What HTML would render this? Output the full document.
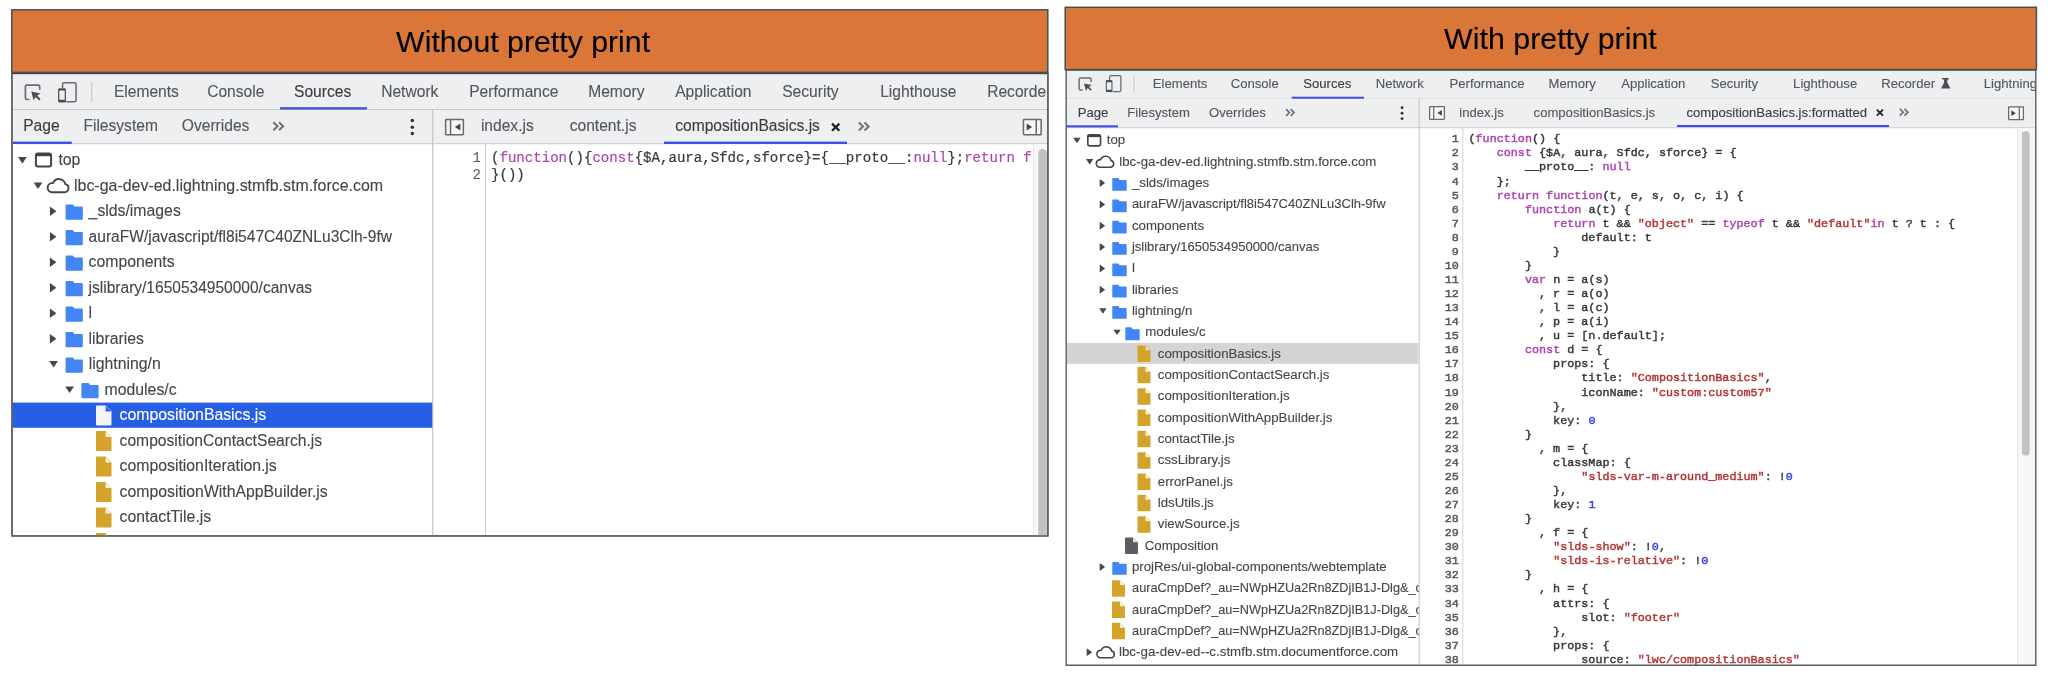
<!DOCTYPE html>
<html><head><meta charset="utf-8"><style>
html,body{margin:0;padding:0;background:#fff;width:2048px;height:683px;overflow:hidden}
svg{display:block;filter:blur(0.3px)}
</style></head><body>
<svg width="2048" height="683" viewBox="0 0 2048 683">
<rect x="12.00" y="73.00" width="1036.00" height="463.00" fill="#ffffff" stroke="#5a5d60" stroke-width="1.4"/>
<rect x="12.70" y="73.70" width="1034.60" height="35.50" fill="#edeff0" />
<rect x="12.00" y="72.40" width="1036.00" height="1.80" fill="#3f4650" />
<rect x="12.70" y="109.00" width="1034.60" height="1.00" fill="#c6c8cb" />
<rect x="12.70" y="110.00" width="1034.60" height="33.40" fill="#edeff0" />
<rect x="12.70" y="143.20" width="1034.60" height="1.00" fill="#c6c8cb" />
<rect x="432.00" y="110.00" width="1.30" height="425.30" fill="#c6c8cb" />
<rect x="485.00" y="144.00" width="1.00" height="391.30" fill="#cdd0d3" />
<rect x="11.80" y="9.80" width="1036.00" height="62.60" fill="#d97638" stroke="#47505a" stroke-width="1.5"/>
<text x="396.10" y="51.70" font-size="30.3" fill="#000" font-family="'Liberation Sans', sans-serif" textLength="254.00" lengthAdjust="spacingAndGlyphs" stroke="#000" stroke-width="0.12" >Without pretty print</text>
<g transform="translate(24.50,84.20) scale(1.0000)"><path d="M5 15.3 H2.6 Q0.9 15.3 0.9 13.6 V2.6 Q0.9 0.9 2.6 0.9 H13.5 Q15.2 0.9 15.2 2.6 V5.5" fill="none" stroke="#686b6f" stroke-width="1.7"/><path d="M6.8 7.3 L16 9.3 L12.7 11.3 L16.1 14.8 L14.7 16.2 L11.2 12.7 L9 16 Z" fill="#4d4f52"/></g>
<g transform="translate(58.00,82.10) scale(1.0000)"><rect x="4.55" y="0.75" width="13.5" height="18.9" rx="1.4" fill="none" stroke="#686b6f" stroke-width="1.5"/><rect x="-0.3" y="6" width="8.6" height="14.6" rx="1.4" fill="#edeff0"/><rect x="0.65" y="6.95" width="6.7" height="12.7" rx="1" fill="none" stroke="#55585c" stroke-width="1.3"/><rect x="0.3" y="6.3" width="7.4" height="2.2" rx="0.8" fill="#4a4d50"/><rect x="0.3" y="17.6" width="7.4" height="2.2" rx="0.8" fill="#4a4d50"/></g>
<rect x="91.00" y="82.00" width="1.30" height="20.00" fill="#c8cacd" />
<text x="113.90" y="97.30" font-size="15.6" fill="#54575b" font-family="'Liberation Sans', sans-serif" stroke="#54575b" stroke-width="0.12" >Elements</text>
<text x="207.20" y="97.30" font-size="15.6" fill="#54575b" font-family="'Liberation Sans', sans-serif" stroke="#54575b" stroke-width="0.12" >Console</text>
<text x="294.00" y="97.30" font-size="15.6" fill="#3a3c3f" font-family="'Liberation Sans', sans-serif" stroke="#3a3c3f" stroke-width="0.12" >Sources</text>
<text x="381.20" y="97.30" font-size="15.6" fill="#54575b" font-family="'Liberation Sans', sans-serif" stroke="#54575b" stroke-width="0.12" >Network</text>
<text x="469.20" y="97.30" font-size="15.6" fill="#54575b" font-family="'Liberation Sans', sans-serif" stroke="#54575b" stroke-width="0.12" >Performance</text>
<text x="588.20" y="97.30" font-size="15.6" fill="#54575b" font-family="'Liberation Sans', sans-serif" stroke="#54575b" stroke-width="0.12" >Memory</text>
<text x="675.20" y="97.30" font-size="15.6" fill="#54575b" font-family="'Liberation Sans', sans-serif" stroke="#54575b" stroke-width="0.12" >Application</text>
<text x="782.20" y="97.30" font-size="15.6" fill="#54575b" font-family="'Liberation Sans', sans-serif" stroke="#54575b" stroke-width="0.12" >Security</text>
<text x="880.20" y="97.30" font-size="15.6" fill="#54575b" font-family="'Liberation Sans', sans-serif" stroke="#54575b" stroke-width="0.12" >Lighthouse</text>
<clipPath id="clipTL"><rect x="0" y="0" width="1047.2" height="683"/></clipPath><g clip-path="url(#clipTL)">
<text x="987.20" y="97.30" font-size="15.6" fill="#54575b" font-family="'Liberation Sans', sans-serif" stroke="#54575b" stroke-width="0.12" >Recorder</text>
</g>
<rect x="280.00" y="107.20" width="87.00" height="2.30" fill="#3f4fe2" />
<text x="23.20" y="131.20" font-size="15.6" fill="#3a3c3f" font-family="'Liberation Sans', sans-serif" stroke="#3a3c3f" stroke-width="0.12" >Page</text>
<text x="83.40" y="131.20" font-size="15.6" fill="#54575b" font-family="'Liberation Sans', sans-serif" stroke="#54575b" stroke-width="0.12" >Filesystem</text>
<text x="181.80" y="131.20" font-size="15.6" fill="#54575b" font-family="'Liberation Sans', sans-serif" stroke="#54575b" stroke-width="0.12" >Overrides</text>
<rect x="12.70" y="141.60" width="59.00" height="2.40" fill="#3f4fe2" />
<g transform="translate(272.20,121.20) scale(1.0000)"><path d="M1.2 1.0 L5.3 5.05 L1.2 9.1 M6.8 1.0 L10.9 5.05 L6.8 9.1" fill="none" stroke="#727477" stroke-width="2.1"/></g>
<g transform="translate(410.55,118.75) scale(1.0000)"><circle cx="1.75" cy="1.75" r="1.75" fill="#333"/><circle cx="1.75" cy="8.45" r="1.75" fill="#333"/><circle cx="1.75" cy="14.85" r="1.75" fill="#333"/></g>
<g transform="translate(444.90,118.70) scale(1.0000)"><rect x="0.75" y="0.75" width="17.7" height="15.2" rx="0.6" fill="#f7f7f8" stroke="#66696d" stroke-width="1.5"/><rect x="4.9" y="0.9" width="1.5" height="14.9" fill="#66696d"/><path d="M10 8.35 L15.4 4.9 V11.8 Z" fill="#444"/></g>
<text x="480.90" y="131.20" font-size="15.6" fill="#54575b" font-family="'Liberation Sans', sans-serif" stroke="#54575b" stroke-width="0.12" >index.js</text>
<text x="569.70" y="131.20" font-size="15.6" fill="#54575b" font-family="'Liberation Sans', sans-serif" stroke="#54575b" stroke-width="0.12" >content.js</text>
<text x="675.20" y="131.20" font-size="15.6" fill="#3a3c3f" font-family="'Liberation Sans', sans-serif" stroke="#3a3c3f" stroke-width="0.12" >compositionBasics.js</text>
<g transform="translate(831.00,122.60) scale(1.0000)"><path d="M1 1 L8.4 8.1 M8.4 1 L1 8.1" fill="none" stroke="#222" stroke-width="2.2"/></g>
<g transform="translate(857.70,121.40) scale(1.0000)"><path d="M1.2 1.0 L5.3 5.05 L1.2 9.1 M6.8 1.0 L10.9 5.05 L6.8 9.1" fill="none" stroke="#727477" stroke-width="2.1"/></g>
<g transform="translate(1022.70,118.70) scale(1.0000)"><rect x="0.75" y="0.75" width="17.7" height="15.2" rx="0.6" fill="#f7f7f8" stroke="#66696d" stroke-width="1.5"/><rect x="12.8" y="0.9" width="1.5" height="14.9" fill="#66696d"/><path d="M9.4 8.35 L4 4.9 V11.8 Z" fill="#444"/></g>
<rect x="664.00" y="141.60" width="183.00" height="2.40" fill="#3f4fe2" />
<g transform="translate(18.00,156.90) scale(1.0000)"><path d="M0 0 H8.8 L4.4 6.5 Z" fill="#474747"/></g>
<g transform="translate(34.90,152.60) scale(1.0000)"><rect x="1" y="1" width="15.2" height="13" rx="2" fill="none" stroke="#444" stroke-width="2"/><rect x="1" y="1" width="15.2" height="2.6" fill="#444"/></g>
<text x="58.40" y="165.30" font-size="15.8" fill="#43464a" font-family="'Liberation Sans', sans-serif" stroke="#43464a" stroke-width="0.12" >top</text>
<g transform="translate(33.60,182.50) scale(1.0000)"><path d="M0 0 H8.8 L4.4 6.5 Z" fill="#474747"/></g>
<g transform="translate(46.60,178.20) scale(1.0000)"><path transform="translate(-0.6 -0.5) scale(1.05)" d="M5.2 13.8 H17.6 A3.9 3.9 0 0 0 18.4 6.1 A6.2 6.2 0 0 0 6.6 5.2 A4.3 4.3 0 0 0 5.2 13.8 Z" fill="none" stroke="#444" stroke-width="1.8" stroke-linejoin="round"/></g>
<text x="74.00" y="190.80" font-size="15.8" fill="#43464a" font-family="'Liberation Sans', sans-serif" stroke="#43464a" stroke-width="0.12" transform="translate(74.00 0) scale(1.0095 1) translate(-74.00 0)" >lbc-ga-dev-ed.lightning.stmfb.stm.force.com</text>
<g transform="translate(49.90,206.40) scale(1.0000)"><path d="M0 0 L6.5 4.8 L0 9.6 Z" fill="#474747"/></g>
<g transform="translate(65.60,204.40) scale(1.0000)"><path d="M0 1 Q0 0 1 0 H7.2 L8.8 2.2 H16.3 Q17.2 2.2 17.2 3.1 V14.4 Q17.2 15.3 16.3 15.3 H0.9 Q0 15.3 0 14.4 Z" fill="#4285f4"/></g>
<text x="88.60" y="216.30" font-size="15.8" fill="#43464a" font-family="'Liberation Sans', sans-serif" stroke="#43464a" stroke-width="0.12" >_slds/images</text>
<g transform="translate(49.90,231.90) scale(1.0000)"><path d="M0 0 L6.5 4.8 L0 9.6 Z" fill="#474747"/></g>
<g transform="translate(65.60,229.90) scale(1.0000)"><path d="M0 1 Q0 0 1 0 H7.2 L8.8 2.2 H16.3 Q17.2 2.2 17.2 3.1 V14.4 Q17.2 15.3 16.3 15.3 H0.9 Q0 15.3 0 14.4 Z" fill="#4285f4"/></g>
<text x="88.60" y="241.80" font-size="15.8" fill="#43464a" font-family="'Liberation Sans', sans-serif" stroke="#43464a" stroke-width="0.12" transform="translate(88.60 0) scale(0.985 1) translate(-88.60 0)" >auraFW/javascript/fl8i547C40ZNLu3Clh-9fw</text>
<g transform="translate(49.90,257.40) scale(1.0000)"><path d="M0 0 L6.5 4.8 L0 9.6 Z" fill="#474747"/></g>
<g transform="translate(65.60,255.40) scale(1.0000)"><path d="M0 1 Q0 0 1 0 H7.2 L8.8 2.2 H16.3 Q17.2 2.2 17.2 3.1 V14.4 Q17.2 15.3 16.3 15.3 H0.9 Q0 15.3 0 14.4 Z" fill="#4285f4"/></g>
<text x="88.60" y="267.30" font-size="15.8" fill="#43464a" font-family="'Liberation Sans', sans-serif" stroke="#43464a" stroke-width="0.12" >components</text>
<g transform="translate(49.90,282.90) scale(1.0000)"><path d="M0 0 L6.5 4.8 L0 9.6 Z" fill="#474747"/></g>
<g transform="translate(65.60,280.90) scale(1.0000)"><path d="M0 1 Q0 0 1 0 H7.2 L8.8 2.2 H16.3 Q17.2 2.2 17.2 3.1 V14.4 Q17.2 15.3 16.3 15.3 H0.9 Q0 15.3 0 14.4 Z" fill="#4285f4"/></g>
<text x="88.60" y="292.80" font-size="15.8" fill="#43464a" font-family="'Liberation Sans', sans-serif" stroke="#43464a" stroke-width="0.12" transform="translate(88.60 0) scale(0.983 1) translate(-88.60 0)" >jslibrary/1650534950000/canvas</text>
<g transform="translate(49.90,308.40) scale(1.0000)"><path d="M0 0 L6.5 4.8 L0 9.6 Z" fill="#474747"/></g>
<g transform="translate(65.60,306.40) scale(1.0000)"><path d="M0 1 Q0 0 1 0 H7.2 L8.8 2.2 H16.3 Q17.2 2.2 17.2 3.1 V14.4 Q17.2 15.3 16.3 15.3 H0.9 Q0 15.3 0 14.4 Z" fill="#4285f4"/></g>
<text x="88.60" y="318.30" font-size="15.8" fill="#43464a" font-family="'Liberation Sans', sans-serif" stroke="#43464a" stroke-width="0.12" >l</text>
<g transform="translate(49.90,333.90) scale(1.0000)"><path d="M0 0 L6.5 4.8 L0 9.6 Z" fill="#474747"/></g>
<g transform="translate(65.60,331.90) scale(1.0000)"><path d="M0 1 Q0 0 1 0 H7.2 L8.8 2.2 H16.3 Q17.2 2.2 17.2 3.1 V14.4 Q17.2 15.3 16.3 15.3 H0.9 Q0 15.3 0 14.4 Z" fill="#4285f4"/></g>
<text x="88.60" y="343.80" font-size="15.8" fill="#43464a" font-family="'Liberation Sans', sans-serif" stroke="#43464a" stroke-width="0.12" >libraries</text>
<g transform="translate(49.20,361.00) scale(1.0000)"><path d="M0 0 H8.8 L4.4 6.5 Z" fill="#474747"/></g>
<g transform="translate(65.60,357.40) scale(1.0000)"><path d="M0 1 Q0 0 1 0 H7.2 L8.8 2.2 H16.3 Q17.2 2.2 17.2 3.1 V14.4 Q17.2 15.3 16.3 15.3 H0.9 Q0 15.3 0 14.4 Z" fill="#4285f4"/></g>
<text x="88.70" y="369.30" font-size="15.8" fill="#43464a" font-family="'Liberation Sans', sans-serif" stroke="#43464a" stroke-width="0.12" >lightning/n</text>
<g transform="translate(65.20,386.50) scale(1.0000)"><path d="M0 0 H8.8 L4.4 6.5 Z" fill="#474747"/></g>
<g transform="translate(81.40,382.90) scale(1.0000)"><path d="M0 1 Q0 0 1 0 H7.2 L8.8 2.2 H16.3 Q17.2 2.2 17.2 3.1 V14.4 Q17.2 15.3 16.3 15.3 H0.9 Q0 15.3 0 14.4 Z" fill="#4285f4"/></g>
<text x="104.60" y="394.80" font-size="15.8" fill="#43464a" font-family="'Liberation Sans', sans-serif" stroke="#43464a" stroke-width="0.12" >modules/c</text>
<rect x="12.70" y="402.60" width="419.50" height="25.20" fill="#265ee4" />
<g transform="translate(96.00,405.60) scale(1.0000)"><path d="M0 1 Q0 0 1 0 H9.6 L15.5 5.8 V18.8 Q15.5 19.8 14.5 19.8 H1 Q0 19.8 0 18.8 Z" fill="#f4f4f4"/><path d="M9.6 0.4 V5.8 H15.1 Z" fill="#265ee4"/></g>
<text x="119.60" y="420.30" font-size="15.8" fill="#ffffff" font-family="'Liberation Sans', sans-serif" stroke="#ffffff" stroke-width="0.12" >compositionBasics.js</text>
<g transform="translate(96.00,431.10) scale(1.0000)"><path d="M0 1 Q0 0 1 0 H9.6 L15.5 5.8 V18.8 Q15.5 19.8 14.5 19.8 H1 Q0 19.8 0 18.8 Z" fill="#d4a32c"/><path d="M9.6 0.4 V5.8 H15.1 Z" fill="#fbf4e0"/></g>
<text x="119.60" y="445.80" font-size="15.8" fill="#43464a" font-family="'Liberation Sans', sans-serif" stroke="#43464a" stroke-width="0.12" transform="translate(119.60 0) scale(0.99 1) translate(-119.60 0)" >compositionContactSearch.js</text>
<g transform="translate(96.00,456.60) scale(1.0000)"><path d="M0 1 Q0 0 1 0 H9.6 L15.5 5.8 V18.8 Q15.5 19.8 14.5 19.8 H1 Q0 19.8 0 18.8 Z" fill="#d4a32c"/><path d="M9.6 0.4 V5.8 H15.1 Z" fill="#fbf4e0"/></g>
<text x="119.60" y="471.30" font-size="15.8" fill="#43464a" font-family="'Liberation Sans', sans-serif" stroke="#43464a" stroke-width="0.12" >compositionIteration.js</text>
<g transform="translate(96.00,482.10) scale(1.0000)"><path d="M0 1 Q0 0 1 0 H9.6 L15.5 5.8 V18.8 Q15.5 19.8 14.5 19.8 H1 Q0 19.8 0 18.8 Z" fill="#d4a32c"/><path d="M9.6 0.4 V5.8 H15.1 Z" fill="#fbf4e0"/></g>
<text x="119.60" y="496.80" font-size="15.8" fill="#43464a" font-family="'Liberation Sans', sans-serif" stroke="#43464a" stroke-width="0.12" >compositionWithAppBuilder.js</text>
<g transform="translate(96.00,507.60) scale(1.0000)"><path d="M0 1 Q0 0 1 0 H9.6 L15.5 5.8 V18.8 Q15.5 19.8 14.5 19.8 H1 Q0 19.8 0 18.8 Z" fill="#d4a32c"/><path d="M9.6 0.4 V5.8 H15.1 Z" fill="#fbf4e0"/></g>
<text x="119.60" y="522.30" font-size="15.8" fill="#43464a" font-family="'Liberation Sans', sans-serif" stroke="#43464a" stroke-width="0.12" >contactTile.js</text>
<g transform="translate(96.00,533.10) scale(1.0000)"><path d="M0 1 Q0 0 1 0 H9.6 L15.5 5.8 V18.8 Q15.5 19.8 14.5 19.8 H1 Q0 19.8 0 18.8 Z" fill="#d4a32c"/><path d="M9.6 0.4 V5.8 H15.1 Z" fill="#fbf4e0"/></g>
<text x="481.00" y="162.10" font-size="14" font-family="'Liberation Mono', monospace" fill="#383838" stroke-width="0.0" text-anchor="end" style="white-space:pre"><tspan fill="#555" stroke="#555">1</tspan></text>
<text x="481.00" y="178.90" font-size="14" font-family="'Liberation Mono', monospace" fill="#383838" stroke-width="0.0" text-anchor="end" style="white-space:pre"><tspan fill="#555" stroke="#555">2</tspan></text>
<text x="491.00" y="162.10" font-size="14.09" font-family="'Liberation Mono', monospace" fill="#383838" stroke-width="0.2" text-anchor="start" style="white-space:pre"><tspan fill="#383838" stroke="#383838">(</tspan><tspan fill="#ad45ad" stroke="#ad45ad">function</tspan><tspan fill="#383838" stroke="#383838">(){</tspan><tspan fill="#ad45ad" stroke="#ad45ad">const</tspan><tspan fill="#383838" stroke="#383838">{$A,aura,Sfdc,sforce}={__proto__:</tspan><tspan fill="#ad45ad" stroke="#ad45ad">null</tspan><tspan fill="#383838" stroke="#383838">};</tspan><tspan fill="#ad45ad" stroke="#ad45ad">return</tspan><tspan fill="#ad45ad" stroke="#ad45ad"> f</tspan></text>
<text x="491.00" y="178.90" font-size="14.09" font-family="'Liberation Mono', monospace" fill="#383838" stroke-width="0.2" text-anchor="start" style="white-space:pre"><tspan fill="#383838" stroke="#383838">}())</tspan></text>
<rect x="1033.00" y="144.00" width="14.30" height="391.30" fill="#f7f7f7" />
<rect x="1033.00" y="144.00" width="1.00" height="391.30" fill="#e6e6e6" />
<rect x="1038.3" y="149" width="8.6" height="400" rx="4.3" fill="#c2c2c2"/>
<rect x="0" y="536.6" width="1060" height="147" fill="#fff"/>
<path d="M12 73 V536 H1047.8 V73" fill="none" stroke="#5a5d60" stroke-width="1.4"/>
<rect x="1066.00" y="69.80" width="970.00" height="595.00" fill="#ffffff" />
<rect x="1066.70" y="70.50" width="968.60" height="27.30" fill="#edeff0" />
<rect x="1066.00" y="69.20" width="970.00" height="1.50" fill="#434a54" />
<rect x="1066.70" y="97.90" width="968.60" height="0.90" fill="#c6c8cb" />
<rect x="1066.70" y="98.50" width="968.60" height="29.00" fill="#edeff0" />
<rect x="1066.70" y="127.30" width="968.60" height="0.90" fill="#c6c8cb" />
<rect x="1418.60" y="98.50" width="1.10" height="566.00" fill="#c6c8cb" />
<rect x="1462.40" y="128.00" width="0.90" height="536.50" fill="#cdd0d3" />
<rect x="1065.20" y="7.30" width="971.20" height="62.30" fill="#d97638" stroke="#47505a" stroke-width="1.5"/>
<text x="1444.00" y="49.20" font-size="30.3" fill="#000" font-family="'Liberation Sans', sans-serif" textLength="212.80" lengthAdjust="spacingAndGlyphs" stroke="#000" stroke-width="0.12" >With pretty print</text>
<g transform="translate(1078.40,77.30) scale(0.8350)"><path d="M5 15.3 H2.6 Q0.9 15.3 0.9 13.6 V2.6 Q0.9 0.9 2.6 0.9 H13.5 Q15.2 0.9 15.2 2.6 V5.5" fill="none" stroke="#686b6f" stroke-width="1.7"/><path d="M6.8 7.3 L16 9.3 L12.7 11.3 L16.1 14.8 L14.7 16.2 L11.2 12.7 L9 16 Z" fill="#4d4f52"/></g>
<g transform="translate(1105.80,75.10) scale(0.8350)"><rect x="4.55" y="0.75" width="13.5" height="18.9" rx="1.4" fill="none" stroke="#686b6f" stroke-width="1.5"/><rect x="-0.3" y="6" width="8.6" height="14.6" rx="1.4" fill="#edeff0"/><rect x="0.65" y="6.95" width="6.7" height="12.7" rx="1" fill="none" stroke="#55585c" stroke-width="1.3"/><rect x="0.3" y="6.3" width="7.4" height="2.2" rx="0.8" fill="#4a4d50"/><rect x="0.3" y="17.6" width="7.4" height="2.2" rx="0.8" fill="#4a4d50"/></g>
<rect x="1133.50" y="75.20" width="1.10" height="17.00" fill="#c8cacd" />
<text x="1152.80" y="88.30" font-size="13.1" fill="#54575b" font-family="'Liberation Sans', sans-serif" stroke="#54575b" stroke-width="0.12" >Elements</text>
<text x="1230.70" y="88.30" font-size="13.1" fill="#54575b" font-family="'Liberation Sans', sans-serif" stroke="#54575b" stroke-width="0.12" >Console</text>
<text x="1303.30" y="88.30" font-size="13.1" fill="#3a3c3f" font-family="'Liberation Sans', sans-serif" stroke="#3a3c3f" stroke-width="0.12" >Sources</text>
<text x="1375.70" y="88.30" font-size="13.1" fill="#54575b" font-family="'Liberation Sans', sans-serif" stroke="#54575b" stroke-width="0.12" >Network</text>
<text x="1449.50" y="88.30" font-size="13.1" fill="#54575b" font-family="'Liberation Sans', sans-serif" stroke="#54575b" stroke-width="0.12" >Performance</text>
<text x="1548.60" y="88.30" font-size="13.1" fill="#54575b" font-family="'Liberation Sans', sans-serif" stroke="#54575b" stroke-width="0.12" >Memory</text>
<text x="1621.20" y="88.30" font-size="13.1" fill="#54575b" font-family="'Liberation Sans', sans-serif" stroke="#54575b" stroke-width="0.12" >Application</text>
<text x="1710.70" y="88.30" font-size="13.1" fill="#54575b" font-family="'Liberation Sans', sans-serif" stroke="#54575b" stroke-width="0.12" >Security</text>
<text x="1793.10" y="88.30" font-size="13.1" fill="#54575b" font-family="'Liberation Sans', sans-serif" stroke="#54575b" stroke-width="0.12" >Lighthouse</text>
<text x="1881.30" y="88.30" font-size="13.1" fill="#54575b" font-family="'Liberation Sans', sans-serif" stroke="#54575b" stroke-width="0.12" >Recorder</text>
<clipPath id="clipTR"><rect x="0" y="0" width="2035.2" height="683"/></clipPath><g clip-path="url(#clipTR)">
<text x="1983.80" y="88.30" font-size="13.1" fill="#54575b" font-family="'Liberation Sans', sans-serif" stroke="#54575b" stroke-width="0.12" >Lightning</text>
</g>
<path d="M1941.6 78.1 H1948.7 V79.6 H1947.3 V82.6 L1950.3 88.6 H1941.1 L1944.1 82.6 V79.6 H1942.6 Z" fill="#4a4d51"/>
<rect x="1291.70" y="96.70" width="72.30" height="2.00" fill="#3f4fe2" />
<text x="1077.70" y="116.60" font-size="13.1" fill="#3a3c3f" font-family="'Liberation Sans', sans-serif" stroke="#3a3c3f" stroke-width="0.12" >Page</text>
<text x="1127.30" y="116.60" font-size="13.1" fill="#54575b" font-family="'Liberation Sans', sans-serif" stroke="#54575b" stroke-width="0.12" >Filesystem</text>
<text x="1209.10" y="116.60" font-size="13.1" fill="#54575b" font-family="'Liberation Sans', sans-serif" stroke="#54575b" stroke-width="0.12" >Overrides</text>
<rect x="1066.70" y="125.30" width="51.30" height="2.10" fill="#3f4fe2" />
<g transform="translate(1285.00,108.40) scale(0.8350)"><path d="M1.2 1.0 L5.3 5.05 L1.2 9.1 M6.8 1.0 L10.9 5.05 L6.8 9.1" fill="none" stroke="#727477" stroke-width="2.1"/></g>
<g transform="translate(1400.60,106.20) scale(0.8350)"><circle cx="1.75" cy="1.75" r="1.75" fill="#333"/><circle cx="1.75" cy="8.45" r="1.75" fill="#333"/><circle cx="1.75" cy="14.85" r="1.75" fill="#333"/></g>
<g transform="translate(1429.00,106.00) scale(0.8350)"><rect x="0.75" y="0.75" width="17.7" height="15.2" rx="0.6" fill="#f7f7f8" stroke="#66696d" stroke-width="1.5"/><rect x="4.9" y="0.9" width="1.5" height="14.9" fill="#66696d"/><path d="M10 8.35 L15.4 4.9 V11.8 Z" fill="#444"/></g>
<text x="1459.30" y="116.60" font-size="13.1" fill="#54575b" font-family="'Liberation Sans', sans-serif" stroke="#54575b" stroke-width="0.12" >index.js</text>
<text x="1533.60" y="116.60" font-size="13.1" fill="#54575b" font-family="'Liberation Sans', sans-serif" stroke="#54575b" stroke-width="0.12" >compositionBasics.js</text>
<text x="1686.50" y="116.60" font-size="13.1" fill="#3a3c3f" font-family="'Liberation Sans', sans-serif" stroke="#3a3c3f" stroke-width="0.12" >compositionBasics.js:formatted</text>
<g transform="translate(1876.00,108.80) scale(0.8350)"><path d="M1 1 L8.4 8.1 M8.4 1 L1 8.1" fill="none" stroke="#222" stroke-width="2.2"/></g>
<g transform="translate(1898.80,108.00) scale(0.8350)"><path d="M1.2 1.0 L5.3 5.05 L1.2 9.1 M6.8 1.0 L10.9 5.05 L6.8 9.1" fill="none" stroke="#727477" stroke-width="2.1"/></g>
<g transform="translate(2008.00,106.20) scale(0.8350)"><rect x="0.75" y="0.75" width="17.7" height="15.2" rx="0.6" fill="#f7f7f8" stroke="#66696d" stroke-width="1.5"/><rect x="12.8" y="0.9" width="1.5" height="14.9" fill="#66696d"/><path d="M9.4 8.35 L4 4.9 V11.8 Z" fill="#444"/></g>
<rect x="1677.00" y="125.00" width="212.00" height="2.10" fill="#3f4fe2" />
<clipPath id="clipR"><rect x="1066.7" y="128" width="351.9" height="536"/></clipPath><g clip-path="url(#clipR)">
<g transform="translate(1073.30,137.70) scale(0.8350)"><path d="M0 0 H8.8 L4.4 6.5 Z" fill="#474747"/></g>
<g transform="translate(1087.00,134.10) scale(0.8350)"><rect x="1" y="1" width="15.2" height="13" rx="2" fill="none" stroke="#444" stroke-width="2"/><rect x="1" y="1" width="15.2" height="2.6" fill="#444"/></g>
<text x="1106.80" y="144.30" font-size="13.25" fill="#43464a" font-family="'Liberation Sans', sans-serif" stroke="#43464a" stroke-width="0.12" >top</text>
<g transform="translate(1086.00,159.03) scale(0.8350)"><path d="M0 0 H8.8 L4.4 6.5 Z" fill="#474747"/></g>
<g transform="translate(1095.40,155.53) scale(0.8350)"><path transform="translate(-0.6 -0.5) scale(1.05)" d="M5.2 13.8 H17.6 A3.9 3.9 0 0 0 18.4 6.1 A6.2 6.2 0 0 0 6.6 5.2 A4.3 4.3 0 0 0 5.2 13.8 Z" fill="none" stroke="#444" stroke-width="1.8" stroke-linejoin="round"/></g>
<text x="1119.30" y="165.63" font-size="13.25" fill="#43464a" font-family="'Liberation Sans', sans-serif" stroke="#43464a" stroke-width="0.12" >lbc-ga-dev-ed.lightning.stmfb.stm.force.com</text>
<g transform="translate(1099.70,179.06) scale(0.8350)"><path d="M0 0 L6.5 4.8 L0 9.6 Z" fill="#474747"/></g>
<g transform="translate(1112.30,178.06) scale(0.8350)"><path d="M0 1 Q0 0 1 0 H7.2 L8.8 2.2 H16.3 Q17.2 2.2 17.2 3.1 V14.4 Q17.2 15.3 16.3 15.3 H0.9 Q0 15.3 0 14.4 Z" fill="#4285f4"/></g>
<text x="1131.90" y="186.96" font-size="13.25" fill="#43464a" font-family="'Liberation Sans', sans-serif" stroke="#43464a" stroke-width="0.12" >_slds/images</text>
<g transform="translate(1099.70,200.39) scale(0.8350)"><path d="M0 0 L6.5 4.8 L0 9.6 Z" fill="#474747"/></g>
<g transform="translate(1112.30,199.39) scale(0.8350)"><path d="M0 1 Q0 0 1 0 H7.2 L8.8 2.2 H16.3 Q17.2 2.2 17.2 3.1 V14.4 Q17.2 15.3 16.3 15.3 H0.9 Q0 15.3 0 14.4 Z" fill="#4285f4"/></g>
<text x="1131.90" y="208.29" font-size="13.25" fill="#43464a" font-family="'Liberation Sans', sans-serif" stroke="#43464a" stroke-width="0.12" transform="translate(1131.90 0) scale(0.982 1) translate(-1131.90 0)" >auraFW/javascript/fl8i547C40ZNLu3Clh-9fw</text>
<g transform="translate(1099.70,221.72) scale(0.8350)"><path d="M0 0 L6.5 4.8 L0 9.6 Z" fill="#474747"/></g>
<g transform="translate(1112.30,220.72) scale(0.8350)"><path d="M0 1 Q0 0 1 0 H7.2 L8.8 2.2 H16.3 Q17.2 2.2 17.2 3.1 V14.4 Q17.2 15.3 16.3 15.3 H0.9 Q0 15.3 0 14.4 Z" fill="#4285f4"/></g>
<text x="1131.90" y="229.62" font-size="13.25" fill="#43464a" font-family="'Liberation Sans', sans-serif" stroke="#43464a" stroke-width="0.12" >components</text>
<g transform="translate(1099.70,243.05) scale(0.8350)"><path d="M0 0 L6.5 4.8 L0 9.6 Z" fill="#474747"/></g>
<g transform="translate(1112.30,242.05) scale(0.8350)"><path d="M0 1 Q0 0 1 0 H7.2 L8.8 2.2 H16.3 Q17.2 2.2 17.2 3.1 V14.4 Q17.2 15.3 16.3 15.3 H0.9 Q0 15.3 0 14.4 Z" fill="#4285f4"/></g>
<text x="1131.90" y="250.95" font-size="13.25" fill="#43464a" font-family="'Liberation Sans', sans-serif" stroke="#43464a" stroke-width="0.12" transform="translate(1131.90 0) scale(0.982 1) translate(-1131.90 0)" >jslibrary/1650534950000/canvas</text>
<g transform="translate(1099.70,264.38) scale(0.8350)"><path d="M0 0 L6.5 4.8 L0 9.6 Z" fill="#474747"/></g>
<g transform="translate(1112.30,263.38) scale(0.8350)"><path d="M0 1 Q0 0 1 0 H7.2 L8.8 2.2 H16.3 Q17.2 2.2 17.2 3.1 V14.4 Q17.2 15.3 16.3 15.3 H0.9 Q0 15.3 0 14.4 Z" fill="#4285f4"/></g>
<text x="1131.90" y="272.28" font-size="13.25" fill="#43464a" font-family="'Liberation Sans', sans-serif" stroke="#43464a" stroke-width="0.12" >l</text>
<g transform="translate(1099.70,285.71) scale(0.8350)"><path d="M0 0 L6.5 4.8 L0 9.6 Z" fill="#474747"/></g>
<g transform="translate(1112.30,284.71) scale(0.8350)"><path d="M0 1 Q0 0 1 0 H7.2 L8.8 2.2 H16.3 Q17.2 2.2 17.2 3.1 V14.4 Q17.2 15.3 16.3 15.3 H0.9 Q0 15.3 0 14.4 Z" fill="#4285f4"/></g>
<text x="1131.90" y="293.61" font-size="13.25" fill="#43464a" font-family="'Liberation Sans', sans-serif" stroke="#43464a" stroke-width="0.12" >libraries</text>
<g transform="translate(1099.20,308.34) scale(0.8350)"><path d="M0 0 H8.8 L4.4 6.5 Z" fill="#474747"/></g>
<g transform="translate(1112.30,306.04) scale(0.8350)"><path d="M0 1 Q0 0 1 0 H7.2 L8.8 2.2 H16.3 Q17.2 2.2 17.2 3.1 V14.4 Q17.2 15.3 16.3 15.3 H0.9 Q0 15.3 0 14.4 Z" fill="#4285f4"/></g>
<text x="1131.90" y="314.94" font-size="13.25" fill="#43464a" font-family="'Liberation Sans', sans-serif" stroke="#43464a" stroke-width="0.12" >lightning/n</text>
<g transform="translate(1113.40,329.67) scale(0.8350)"><path d="M0 0 H8.8 L4.4 6.5 Z" fill="#474747"/></g>
<g transform="translate(1125.30,327.37) scale(0.8350)"><path d="M0 1 Q0 0 1 0 H7.2 L8.8 2.2 H16.3 Q17.2 2.2 17.2 3.1 V14.4 Q17.2 15.3 16.3 15.3 H0.9 Q0 15.3 0 14.4 Z" fill="#4285f4"/></g>
<text x="1145.20" y="336.27" font-size="13.25" fill="#43464a" font-family="'Liberation Sans', sans-serif" stroke="#43464a" stroke-width="0.12" >modules/c</text>
<rect x="1066.70" y="343.00" width="351.90" height="20.80" fill="#d4d4d4" />
<g transform="translate(1137.50,345.50) scale(0.8350)"><path d="M0 1 Q0 0 1 0 H9.6 L15.5 5.8 V18.8 Q15.5 19.8 14.5 19.8 H1 Q0 19.8 0 18.8 Z" fill="#d4a32c"/><path d="M9.6 0.4 V5.8 H15.1 Z" fill="#f0dcaa"/></g>
<text x="1157.80" y="357.60" font-size="13.25" fill="#43464a" font-family="'Liberation Sans', sans-serif" stroke="#43464a" stroke-width="0.12" >compositionBasics.js</text>
<g transform="translate(1137.50,366.83) scale(0.8350)"><path d="M0 1 Q0 0 1 0 H9.6 L15.5 5.8 V18.8 Q15.5 19.8 14.5 19.8 H1 Q0 19.8 0 18.8 Z" fill="#d4a32c"/><path d="M9.6 0.4 V5.8 H15.1 Z" fill="#fbf4e0"/></g>
<text x="1157.80" y="378.93" font-size="13.25" fill="#43464a" font-family="'Liberation Sans', sans-serif" stroke="#43464a" stroke-width="0.12" >compositionContactSearch.js</text>
<g transform="translate(1137.50,388.16) scale(0.8350)"><path d="M0 1 Q0 0 1 0 H9.6 L15.5 5.8 V18.8 Q15.5 19.8 14.5 19.8 H1 Q0 19.8 0 18.8 Z" fill="#d4a32c"/><path d="M9.6 0.4 V5.8 H15.1 Z" fill="#fbf4e0"/></g>
<text x="1157.80" y="400.26" font-size="13.25" fill="#43464a" font-family="'Liberation Sans', sans-serif" stroke="#43464a" stroke-width="0.12" >compositionIteration.js</text>
<g transform="translate(1137.50,409.49) scale(0.8350)"><path d="M0 1 Q0 0 1 0 H9.6 L15.5 5.8 V18.8 Q15.5 19.8 14.5 19.8 H1 Q0 19.8 0 18.8 Z" fill="#d4a32c"/><path d="M9.6 0.4 V5.8 H15.1 Z" fill="#fbf4e0"/></g>
<text x="1157.80" y="421.59" font-size="13.25" fill="#43464a" font-family="'Liberation Sans', sans-serif" stroke="#43464a" stroke-width="0.12" >compositionWithAppBuilder.js</text>
<g transform="translate(1137.50,430.82) scale(0.8350)"><path d="M0 1 Q0 0 1 0 H9.6 L15.5 5.8 V18.8 Q15.5 19.8 14.5 19.8 H1 Q0 19.8 0 18.8 Z" fill="#d4a32c"/><path d="M9.6 0.4 V5.8 H15.1 Z" fill="#fbf4e0"/></g>
<text x="1157.80" y="442.92" font-size="13.25" fill="#43464a" font-family="'Liberation Sans', sans-serif" stroke="#43464a" stroke-width="0.12" >contactTile.js</text>
<g transform="translate(1137.50,452.15) scale(0.8350)"><path d="M0 1 Q0 0 1 0 H9.6 L15.5 5.8 V18.8 Q15.5 19.8 14.5 19.8 H1 Q0 19.8 0 18.8 Z" fill="#d4a32c"/><path d="M9.6 0.4 V5.8 H15.1 Z" fill="#fbf4e0"/></g>
<text x="1157.80" y="464.25" font-size="13.25" fill="#43464a" font-family="'Liberation Sans', sans-serif" stroke="#43464a" stroke-width="0.12" >cssLibrary.js</text>
<g transform="translate(1137.50,473.48) scale(0.8350)"><path d="M0 1 Q0 0 1 0 H9.6 L15.5 5.8 V18.8 Q15.5 19.8 14.5 19.8 H1 Q0 19.8 0 18.8 Z" fill="#d4a32c"/><path d="M9.6 0.4 V5.8 H15.1 Z" fill="#fbf4e0"/></g>
<text x="1157.80" y="485.58" font-size="13.25" fill="#43464a" font-family="'Liberation Sans', sans-serif" stroke="#43464a" stroke-width="0.12" >errorPanel.js</text>
<g transform="translate(1137.50,494.81) scale(0.8350)"><path d="M0 1 Q0 0 1 0 H9.6 L15.5 5.8 V18.8 Q15.5 19.8 14.5 19.8 H1 Q0 19.8 0 18.8 Z" fill="#d4a32c"/><path d="M9.6 0.4 V5.8 H15.1 Z" fill="#fbf4e0"/></g>
<text x="1157.80" y="506.91" font-size="13.25" fill="#43464a" font-family="'Liberation Sans', sans-serif" stroke="#43464a" stroke-width="0.12" >ldsUtils.js</text>
<g transform="translate(1137.50,516.14) scale(0.8350)"><path d="M0 1 Q0 0 1 0 H9.6 L15.5 5.8 V18.8 Q15.5 19.8 14.5 19.8 H1 Q0 19.8 0 18.8 Z" fill="#d4a32c"/><path d="M9.6 0.4 V5.8 H15.1 Z" fill="#fbf4e0"/></g>
<text x="1157.80" y="528.24" font-size="13.25" fill="#43464a" font-family="'Liberation Sans', sans-serif" stroke="#43464a" stroke-width="0.12" >viewSource.js</text>
<g transform="translate(1125.00,537.47) scale(0.8350)"><path d="M0 1 Q0 0 1 0 H9.6 L15.5 5.8 V18.8 Q15.5 19.8 14.5 19.8 H1 Q0 19.8 0 18.8 Z" fill="#5a5d61"/><path d="M9.6 0.4 V5.8 H15.1 Z" fill="#e8e8e8"/></g>
<text x="1144.70" y="549.57" font-size="13.25" fill="#43464a" font-family="'Liberation Sans', sans-serif" stroke="#43464a" stroke-width="0.12" >Composition</text>
<g transform="translate(1099.70,563.00) scale(0.8350)"><path d="M0 0 L6.5 4.8 L0 9.6 Z" fill="#474747"/></g>
<g transform="translate(1112.30,562.00) scale(0.8350)"><path d="M0 1 Q0 0 1 0 H7.2 L8.8 2.2 H16.3 Q17.2 2.2 17.2 3.1 V14.4 Q17.2 15.3 16.3 15.3 H0.9 Q0 15.3 0 14.4 Z" fill="#4285f4"/></g>
<text x="1131.90" y="570.90" font-size="13.25" fill="#43464a" font-family="'Liberation Sans', sans-serif" stroke="#43464a" stroke-width="0.12" >projRes/ui-global-components/webtemplate</text>
<g transform="translate(1112.00,580.13) scale(0.8350)"><path d="M0 1 Q0 0 1 0 H9.6 L15.5 5.8 V18.8 Q15.5 19.8 14.5 19.8 H1 Q0 19.8 0 18.8 Z" fill="#d4a32c"/><path d="M9.6 0.4 V5.8 H15.1 Z" fill="#fbf4e0"/></g>
<text x="1132.10" y="592.23" font-size="13.25" fill="#43464a" font-family="'Liberation Sans', sans-serif" stroke="#43464a" stroke-width="0.12" transform="translate(1132.10 0) scale(0.96 1) translate(-1132.10 0)" >auraCmpDef?_au=NWpHZUa2Rn8ZDjIB1J-Dlg&amp;_c</text>
<g transform="translate(1112.00,601.46) scale(0.8350)"><path d="M0 1 Q0 0 1 0 H9.6 L15.5 5.8 V18.8 Q15.5 19.8 14.5 19.8 H1 Q0 19.8 0 18.8 Z" fill="#d4a32c"/><path d="M9.6 0.4 V5.8 H15.1 Z" fill="#fbf4e0"/></g>
<text x="1132.10" y="613.56" font-size="13.25" fill="#43464a" font-family="'Liberation Sans', sans-serif" stroke="#43464a" stroke-width="0.12" transform="translate(1132.10 0) scale(0.96 1) translate(-1132.10 0)" >auraCmpDef?_au=NWpHZUa2Rn8ZDjIB1J-Dlg&amp;_c</text>
<g transform="translate(1112.00,622.79) scale(0.8350)"><path d="M0 1 Q0 0 1 0 H9.6 L15.5 5.8 V18.8 Q15.5 19.8 14.5 19.8 H1 Q0 19.8 0 18.8 Z" fill="#d4a32c"/><path d="M9.6 0.4 V5.8 H15.1 Z" fill="#fbf4e0"/></g>
<text x="1132.10" y="634.89" font-size="13.25" fill="#43464a" font-family="'Liberation Sans', sans-serif" stroke="#43464a" stroke-width="0.12" transform="translate(1132.10 0) scale(0.96 1) translate(-1132.10 0)" >auraCmpDef?_au=NWpHZUa2Rn8ZDjIB1J-Dlg&amp;_c</text>
<g transform="translate(1086.70,648.32) scale(0.8350)"><path d="M0 0 L6.5 4.8 L0 9.6 Z" fill="#474747"/></g>
<g transform="translate(1096.00,646.12) scale(0.8350)"><path transform="translate(-0.6 -0.5) scale(1.05)" d="M5.2 13.8 H17.6 A3.9 3.9 0 0 0 18.4 6.1 A6.2 6.2 0 0 0 6.6 5.2 A4.3 4.3 0 0 0 5.2 13.8 Z" fill="none" stroke="#444" stroke-width="1.8" stroke-linejoin="round"/></g>
<text x="1119.00" y="656.22" font-size="13.25" fill="#43464a" font-family="'Liberation Sans', sans-serif" stroke="#43464a" stroke-width="0.12" transform="translate(1119.00 0) scale(1.007 1) translate(-1119.00 0)" >lbc-ga-dev-ed--c.stmfb.stm.documentforce.com</text>
</g>
<text x="1458.80" y="142.30" font-size="11.75" font-family="'Liberation Mono', monospace" fill="#383838" stroke-width="0.45" text-anchor="end" style="white-space:pre"><tspan fill="#555" stroke="#555">1</tspan></text>
<text x="1468.50" y="142.30" font-size="11.75" font-family="'Liberation Mono', monospace" fill="#383838" stroke-width="0.45" text-anchor="start" style="white-space:pre"><tspan fill="#383838" stroke="#383838">(</tspan><tspan fill="#ad45ad" stroke="#ad45ad">function</tspan><tspan fill="#383838" stroke="#383838">() {</tspan></text>
<text x="1458.80" y="156.37" font-size="11.75" font-family="'Liberation Mono', monospace" fill="#383838" stroke-width="0.45" text-anchor="end" style="white-space:pre"><tspan fill="#555" stroke="#555">2</tspan></text>
<text x="1468.50" y="156.37" font-size="11.75" font-family="'Liberation Mono', monospace" fill="#383838" stroke-width="0.45" text-anchor="start" style="white-space:pre"><tspan fill="#383838" stroke="#383838">    </tspan><tspan fill="#ad45ad" stroke="#ad45ad">const</tspan><tspan fill="#383838" stroke="#383838"> {$A, aura, Sfdc, sforce} = {</tspan></text>
<text x="1458.80" y="170.43" font-size="11.75" font-family="'Liberation Mono', monospace" fill="#383838" stroke-width="0.45" text-anchor="end" style="white-space:pre"><tspan fill="#555" stroke="#555">3</tspan></text>
<text x="1468.50" y="170.43" font-size="11.75" font-family="'Liberation Mono', monospace" fill="#383838" stroke-width="0.45" text-anchor="start" style="white-space:pre"><tspan fill="#383838" stroke="#383838">        __proto__: </tspan><tspan fill="#ad45ad" stroke="#ad45ad">null</tspan></text>
<text x="1458.80" y="184.50" font-size="11.75" font-family="'Liberation Mono', monospace" fill="#383838" stroke-width="0.45" text-anchor="end" style="white-space:pre"><tspan fill="#555" stroke="#555">4</tspan></text>
<text x="1468.50" y="184.50" font-size="11.75" font-family="'Liberation Mono', monospace" fill="#383838" stroke-width="0.45" text-anchor="start" style="white-space:pre"><tspan fill="#383838" stroke="#383838">    };</tspan></text>
<text x="1458.80" y="198.57" font-size="11.75" font-family="'Liberation Mono', monospace" fill="#383838" stroke-width="0.45" text-anchor="end" style="white-space:pre"><tspan fill="#555" stroke="#555">5</tspan></text>
<text x="1468.50" y="198.57" font-size="11.75" font-family="'Liberation Mono', monospace" fill="#383838" stroke-width="0.45" text-anchor="start" style="white-space:pre"><tspan fill="#383838" stroke="#383838">    </tspan><tspan fill="#ad45ad" stroke="#ad45ad">return</tspan><tspan fill="#383838" stroke="#383838"> </tspan><tspan fill="#ad45ad" stroke="#ad45ad">function</tspan><tspan fill="#383838" stroke="#383838">(t, e, s, o, c, i) {</tspan></text>
<text x="1458.80" y="212.64" font-size="11.75" font-family="'Liberation Mono', monospace" fill="#383838" stroke-width="0.45" text-anchor="end" style="white-space:pre"><tspan fill="#555" stroke="#555">6</tspan></text>
<text x="1468.50" y="212.64" font-size="11.75" font-family="'Liberation Mono', monospace" fill="#383838" stroke-width="0.45" text-anchor="start" style="white-space:pre"><tspan fill="#383838" stroke="#383838">        </tspan><tspan fill="#ad45ad" stroke="#ad45ad">function</tspan><tspan fill="#383838" stroke="#383838"> a(t) {</tspan></text>
<text x="1458.80" y="226.70" font-size="11.75" font-family="'Liberation Mono', monospace" fill="#383838" stroke-width="0.45" text-anchor="end" style="white-space:pre"><tspan fill="#555" stroke="#555">7</tspan></text>
<text x="1468.50" y="226.70" font-size="11.75" font-family="'Liberation Mono', monospace" fill="#383838" stroke-width="0.45" text-anchor="start" style="white-space:pre"><tspan fill="#383838" stroke="#383838">            </tspan><tspan fill="#ad45ad" stroke="#ad45ad">return</tspan><tspan fill="#383838" stroke="#383838"> t &amp;&amp; </tspan><tspan fill="#b33535" stroke="#b33535">&quot;object&quot;</tspan><tspan fill="#383838" stroke="#383838"> == </tspan><tspan fill="#ad45ad" stroke="#ad45ad">typeof</tspan><tspan fill="#383838" stroke="#383838"> t &amp;&amp; </tspan><tspan fill="#b33535" stroke="#b33535">&quot;default&quot;</tspan><tspan fill="#ad45ad" stroke="#ad45ad">in</tspan><tspan fill="#383838" stroke="#383838"> t ? t : {</tspan></text>
<text x="1458.80" y="240.77" font-size="11.75" font-family="'Liberation Mono', monospace" fill="#383838" stroke-width="0.45" text-anchor="end" style="white-space:pre"><tspan fill="#555" stroke="#555">8</tspan></text>
<text x="1468.50" y="240.77" font-size="11.75" font-family="'Liberation Mono', monospace" fill="#383838" stroke-width="0.45" text-anchor="start" style="white-space:pre"><tspan fill="#383838" stroke="#383838">                default: t</tspan></text>
<text x="1458.80" y="254.84" font-size="11.75" font-family="'Liberation Mono', monospace" fill="#383838" stroke-width="0.45" text-anchor="end" style="white-space:pre"><tspan fill="#555" stroke="#555">9</tspan></text>
<text x="1468.50" y="254.84" font-size="11.75" font-family="'Liberation Mono', monospace" fill="#383838" stroke-width="0.45" text-anchor="start" style="white-space:pre"><tspan fill="#383838" stroke="#383838">            }</tspan></text>
<text x="1458.80" y="268.90" font-size="11.75" font-family="'Liberation Mono', monospace" fill="#383838" stroke-width="0.45" text-anchor="end" style="white-space:pre"><tspan fill="#555" stroke="#555">10</tspan></text>
<text x="1468.50" y="268.90" font-size="11.75" font-family="'Liberation Mono', monospace" fill="#383838" stroke-width="0.45" text-anchor="start" style="white-space:pre"><tspan fill="#383838" stroke="#383838">        }</tspan></text>
<text x="1458.80" y="282.97" font-size="11.75" font-family="'Liberation Mono', monospace" fill="#383838" stroke-width="0.45" text-anchor="end" style="white-space:pre"><tspan fill="#555" stroke="#555">11</tspan></text>
<text x="1468.50" y="282.97" font-size="11.75" font-family="'Liberation Mono', monospace" fill="#383838" stroke-width="0.45" text-anchor="start" style="white-space:pre"><tspan fill="#383838" stroke="#383838">        </tspan><tspan fill="#ad45ad" stroke="#ad45ad">var</tspan><tspan fill="#383838" stroke="#383838"> n = a(s)</tspan></text>
<text x="1458.80" y="297.04" font-size="11.75" font-family="'Liberation Mono', monospace" fill="#383838" stroke-width="0.45" text-anchor="end" style="white-space:pre"><tspan fill="#555" stroke="#555">12</tspan></text>
<text x="1468.50" y="297.04" font-size="11.75" font-family="'Liberation Mono', monospace" fill="#383838" stroke-width="0.45" text-anchor="start" style="white-space:pre"><tspan fill="#383838" stroke="#383838">          , r = a(o)</tspan></text>
<text x="1458.80" y="311.10" font-size="11.75" font-family="'Liberation Mono', monospace" fill="#383838" stroke-width="0.45" text-anchor="end" style="white-space:pre"><tspan fill="#555" stroke="#555">13</tspan></text>
<text x="1468.50" y="311.10" font-size="11.75" font-family="'Liberation Mono', monospace" fill="#383838" stroke-width="0.45" text-anchor="start" style="white-space:pre"><tspan fill="#383838" stroke="#383838">          , l = a(c)</tspan></text>
<text x="1458.80" y="325.17" font-size="11.75" font-family="'Liberation Mono', monospace" fill="#383838" stroke-width="0.45" text-anchor="end" style="white-space:pre"><tspan fill="#555" stroke="#555">14</tspan></text>
<text x="1468.50" y="325.17" font-size="11.75" font-family="'Liberation Mono', monospace" fill="#383838" stroke-width="0.45" text-anchor="start" style="white-space:pre"><tspan fill="#383838" stroke="#383838">          , p = a(i)</tspan></text>
<text x="1458.80" y="339.24" font-size="11.75" font-family="'Liberation Mono', monospace" fill="#383838" stroke-width="0.45" text-anchor="end" style="white-space:pre"><tspan fill="#555" stroke="#555">15</tspan></text>
<text x="1468.50" y="339.24" font-size="11.75" font-family="'Liberation Mono', monospace" fill="#383838" stroke-width="0.45" text-anchor="start" style="white-space:pre"><tspan fill="#383838" stroke="#383838">          , u = [n.default];</tspan></text>
<text x="1458.80" y="353.31" font-size="11.75" font-family="'Liberation Mono', monospace" fill="#383838" stroke-width="0.45" text-anchor="end" style="white-space:pre"><tspan fill="#555" stroke="#555">16</tspan></text>
<text x="1468.50" y="353.31" font-size="11.75" font-family="'Liberation Mono', monospace" fill="#383838" stroke-width="0.45" text-anchor="start" style="white-space:pre"><tspan fill="#383838" stroke="#383838">        </tspan><tspan fill="#ad45ad" stroke="#ad45ad">const</tspan><tspan fill="#383838" stroke="#383838"> d = {</tspan></text>
<text x="1458.80" y="367.37" font-size="11.75" font-family="'Liberation Mono', monospace" fill="#383838" stroke-width="0.45" text-anchor="end" style="white-space:pre"><tspan fill="#555" stroke="#555">17</tspan></text>
<text x="1468.50" y="367.37" font-size="11.75" font-family="'Liberation Mono', monospace" fill="#383838" stroke-width="0.45" text-anchor="start" style="white-space:pre"><tspan fill="#383838" stroke="#383838">            props: {</tspan></text>
<text x="1458.80" y="381.44" font-size="11.75" font-family="'Liberation Mono', monospace" fill="#383838" stroke-width="0.45" text-anchor="end" style="white-space:pre"><tspan fill="#555" stroke="#555">18</tspan></text>
<text x="1468.50" y="381.44" font-size="11.75" font-family="'Liberation Mono', monospace" fill="#383838" stroke-width="0.45" text-anchor="start" style="white-space:pre"><tspan fill="#383838" stroke="#383838">                title: </tspan><tspan fill="#b33535" stroke="#b33535">&quot;CompositionBasics&quot;</tspan><tspan fill="#383838" stroke="#383838">,</tspan></text>
<text x="1458.80" y="395.51" font-size="11.75" font-family="'Liberation Mono', monospace" fill="#383838" stroke-width="0.45" text-anchor="end" style="white-space:pre"><tspan fill="#555" stroke="#555">19</tspan></text>
<text x="1468.50" y="395.51" font-size="11.75" font-family="'Liberation Mono', monospace" fill="#383838" stroke-width="0.45" text-anchor="start" style="white-space:pre"><tspan fill="#383838" stroke="#383838">                iconName: </tspan><tspan fill="#b33535" stroke="#b33535">&quot;custom:custom57&quot;</tspan></text>
<text x="1458.80" y="409.57" font-size="11.75" font-family="'Liberation Mono', monospace" fill="#383838" stroke-width="0.45" text-anchor="end" style="white-space:pre"><tspan fill="#555" stroke="#555">20</tspan></text>
<text x="1468.50" y="409.57" font-size="11.75" font-family="'Liberation Mono', monospace" fill="#383838" stroke-width="0.45" text-anchor="start" style="white-space:pre"><tspan fill="#383838" stroke="#383838">            },</tspan></text>
<text x="1458.80" y="423.64" font-size="11.75" font-family="'Liberation Mono', monospace" fill="#383838" stroke-width="0.45" text-anchor="end" style="white-space:pre"><tspan fill="#555" stroke="#555">21</tspan></text>
<text x="1468.50" y="423.64" font-size="11.75" font-family="'Liberation Mono', monospace" fill="#383838" stroke-width="0.45" text-anchor="start" style="white-space:pre"><tspan fill="#383838" stroke="#383838">            key: </tspan><tspan fill="#3a40e2" stroke="#3a40e2">0</tspan></text>
<text x="1458.80" y="437.71" font-size="11.75" font-family="'Liberation Mono', monospace" fill="#383838" stroke-width="0.45" text-anchor="end" style="white-space:pre"><tspan fill="#555" stroke="#555">22</tspan></text>
<text x="1468.50" y="437.71" font-size="11.75" font-family="'Liberation Mono', monospace" fill="#383838" stroke-width="0.45" text-anchor="start" style="white-space:pre"><tspan fill="#383838" stroke="#383838">        }</tspan></text>
<text x="1458.80" y="451.77" font-size="11.75" font-family="'Liberation Mono', monospace" fill="#383838" stroke-width="0.45" text-anchor="end" style="white-space:pre"><tspan fill="#555" stroke="#555">23</tspan></text>
<text x="1468.50" y="451.77" font-size="11.75" font-family="'Liberation Mono', monospace" fill="#383838" stroke-width="0.45" text-anchor="start" style="white-space:pre"><tspan fill="#383838" stroke="#383838">          , m = {</tspan></text>
<text x="1458.80" y="465.84" font-size="11.75" font-family="'Liberation Mono', monospace" fill="#383838" stroke-width="0.45" text-anchor="end" style="white-space:pre"><tspan fill="#555" stroke="#555">24</tspan></text>
<text x="1468.50" y="465.84" font-size="11.75" font-family="'Liberation Mono', monospace" fill="#383838" stroke-width="0.45" text-anchor="start" style="white-space:pre"><tspan fill="#383838" stroke="#383838">            classMap: {</tspan></text>
<text x="1458.80" y="479.91" font-size="11.75" font-family="'Liberation Mono', monospace" fill="#383838" stroke-width="0.45" text-anchor="end" style="white-space:pre"><tspan fill="#555" stroke="#555">25</tspan></text>
<text x="1468.50" y="479.91" font-size="11.75" font-family="'Liberation Mono', monospace" fill="#383838" stroke-width="0.45" text-anchor="start" style="white-space:pre"><tspan fill="#383838" stroke="#383838">                </tspan><tspan fill="#b33535" stroke="#b33535">&quot;slds-var-m-around_medium&quot;</tspan><tspan fill="#383838" stroke="#383838">: !</tspan><tspan fill="#3a40e2" stroke="#3a40e2">0</tspan></text>
<text x="1458.80" y="493.98" font-size="11.75" font-family="'Liberation Mono', monospace" fill="#383838" stroke-width="0.45" text-anchor="end" style="white-space:pre"><tspan fill="#555" stroke="#555">26</tspan></text>
<text x="1468.50" y="493.98" font-size="11.75" font-family="'Liberation Mono', monospace" fill="#383838" stroke-width="0.45" text-anchor="start" style="white-space:pre"><tspan fill="#383838" stroke="#383838">            },</tspan></text>
<text x="1458.80" y="508.04" font-size="11.75" font-family="'Liberation Mono', monospace" fill="#383838" stroke-width="0.45" text-anchor="end" style="white-space:pre"><tspan fill="#555" stroke="#555">27</tspan></text>
<text x="1468.50" y="508.04" font-size="11.75" font-family="'Liberation Mono', monospace" fill="#383838" stroke-width="0.45" text-anchor="start" style="white-space:pre"><tspan fill="#383838" stroke="#383838">            key: </tspan><tspan fill="#3a40e2" stroke="#3a40e2">1</tspan></text>
<text x="1458.80" y="522.11" font-size="11.75" font-family="'Liberation Mono', monospace" fill="#383838" stroke-width="0.45" text-anchor="end" style="white-space:pre"><tspan fill="#555" stroke="#555">28</tspan></text>
<text x="1468.50" y="522.11" font-size="11.75" font-family="'Liberation Mono', monospace" fill="#383838" stroke-width="0.45" text-anchor="start" style="white-space:pre"><tspan fill="#383838" stroke="#383838">        }</tspan></text>
<text x="1458.80" y="536.18" font-size="11.75" font-family="'Liberation Mono', monospace" fill="#383838" stroke-width="0.45" text-anchor="end" style="white-space:pre"><tspan fill="#555" stroke="#555">29</tspan></text>
<text x="1468.50" y="536.18" font-size="11.75" font-family="'Liberation Mono', monospace" fill="#383838" stroke-width="0.45" text-anchor="start" style="white-space:pre"><tspan fill="#383838" stroke="#383838">          , f = {</tspan></text>
<text x="1458.80" y="550.24" font-size="11.75" font-family="'Liberation Mono', monospace" fill="#383838" stroke-width="0.45" text-anchor="end" style="white-space:pre"><tspan fill="#555" stroke="#555">30</tspan></text>
<text x="1468.50" y="550.24" font-size="11.75" font-family="'Liberation Mono', monospace" fill="#383838" stroke-width="0.45" text-anchor="start" style="white-space:pre"><tspan fill="#383838" stroke="#383838">            </tspan><tspan fill="#b33535" stroke="#b33535">&quot;slds-show&quot;</tspan><tspan fill="#383838" stroke="#383838">: !</tspan><tspan fill="#3a40e2" stroke="#3a40e2">0</tspan><tspan fill="#383838" stroke="#383838">,</tspan></text>
<text x="1458.80" y="564.31" font-size="11.75" font-family="'Liberation Mono', monospace" fill="#383838" stroke-width="0.45" text-anchor="end" style="white-space:pre"><tspan fill="#555" stroke="#555">31</tspan></text>
<text x="1468.50" y="564.31" font-size="11.75" font-family="'Liberation Mono', monospace" fill="#383838" stroke-width="0.45" text-anchor="start" style="white-space:pre"><tspan fill="#383838" stroke="#383838">            </tspan><tspan fill="#b33535" stroke="#b33535">&quot;slds-is-relative&quot;</tspan><tspan fill="#383838" stroke="#383838">: !</tspan><tspan fill="#3a40e2" stroke="#3a40e2">0</tspan></text>
<text x="1458.80" y="578.38" font-size="11.75" font-family="'Liberation Mono', monospace" fill="#383838" stroke-width="0.45" text-anchor="end" style="white-space:pre"><tspan fill="#555" stroke="#555">32</tspan></text>
<text x="1468.50" y="578.38" font-size="11.75" font-family="'Liberation Mono', monospace" fill="#383838" stroke-width="0.45" text-anchor="start" style="white-space:pre"><tspan fill="#383838" stroke="#383838">        }</tspan></text>
<text x="1458.80" y="592.44" font-size="11.75" font-family="'Liberation Mono', monospace" fill="#383838" stroke-width="0.45" text-anchor="end" style="white-space:pre"><tspan fill="#555" stroke="#555">33</tspan></text>
<text x="1468.50" y="592.44" font-size="11.75" font-family="'Liberation Mono', monospace" fill="#383838" stroke-width="0.45" text-anchor="start" style="white-space:pre"><tspan fill="#383838" stroke="#383838">          , h = {</tspan></text>
<text x="1458.80" y="606.51" font-size="11.75" font-family="'Liberation Mono', monospace" fill="#383838" stroke-width="0.45" text-anchor="end" style="white-space:pre"><tspan fill="#555" stroke="#555">34</tspan></text>
<text x="1468.50" y="606.51" font-size="11.75" font-family="'Liberation Mono', monospace" fill="#383838" stroke-width="0.45" text-anchor="start" style="white-space:pre"><tspan fill="#383838" stroke="#383838">            attrs: {</tspan></text>
<text x="1458.80" y="620.58" font-size="11.75" font-family="'Liberation Mono', monospace" fill="#383838" stroke-width="0.45" text-anchor="end" style="white-space:pre"><tspan fill="#555" stroke="#555">35</tspan></text>
<text x="1468.50" y="620.58" font-size="11.75" font-family="'Liberation Mono', monospace" fill="#383838" stroke-width="0.45" text-anchor="start" style="white-space:pre"><tspan fill="#383838" stroke="#383838">                slot: </tspan><tspan fill="#b33535" stroke="#b33535">&quot;footer&quot;</tspan></text>
<text x="1458.80" y="634.64" font-size="11.75" font-family="'Liberation Mono', monospace" fill="#383838" stroke-width="0.45" text-anchor="end" style="white-space:pre"><tspan fill="#555" stroke="#555">36</tspan></text>
<text x="1468.50" y="634.64" font-size="11.75" font-family="'Liberation Mono', monospace" fill="#383838" stroke-width="0.45" text-anchor="start" style="white-space:pre"><tspan fill="#383838" stroke="#383838">            },</tspan></text>
<text x="1458.80" y="648.71" font-size="11.75" font-family="'Liberation Mono', monospace" fill="#383838" stroke-width="0.45" text-anchor="end" style="white-space:pre"><tspan fill="#555" stroke="#555">37</tspan></text>
<text x="1468.50" y="648.71" font-size="11.75" font-family="'Liberation Mono', monospace" fill="#383838" stroke-width="0.45" text-anchor="start" style="white-space:pre"><tspan fill="#383838" stroke="#383838">            props: {</tspan></text>
<text x="1458.80" y="662.78" font-size="11.75" font-family="'Liberation Mono', monospace" fill="#383838" stroke-width="0.45" text-anchor="end" style="white-space:pre"><tspan fill="#555" stroke="#555">38</tspan></text>
<text x="1468.50" y="662.78" font-size="11.75" font-family="'Liberation Mono', monospace" fill="#383838" stroke-width="0.45" text-anchor="start" style="white-space:pre"><tspan fill="#383838" stroke="#383838">                source: </tspan><tspan fill="#b33535" stroke="#b33535">&quot;lwc/compositionBasics&quot;</tspan></text>
<rect x="2017.00" y="128.00" width="18.30" height="536.50" fill="#f7f7f7" />
<rect x="2017.00" y="128.00" width="0.90" height="536.50" fill="#e6e6e6" />
<rect x="2021.8" y="131" width="7.9" height="324.6" rx="3.95" fill="#c2c2c2"/>
<rect x="1050" y="665.5" width="998" height="20" fill="#fff"/>
<path d="M1066.2 69.8 V665.2 H2035.8 V69.8" fill="none" stroke="#5a5d60" stroke-width="1.4"/>
</svg></body></html>
